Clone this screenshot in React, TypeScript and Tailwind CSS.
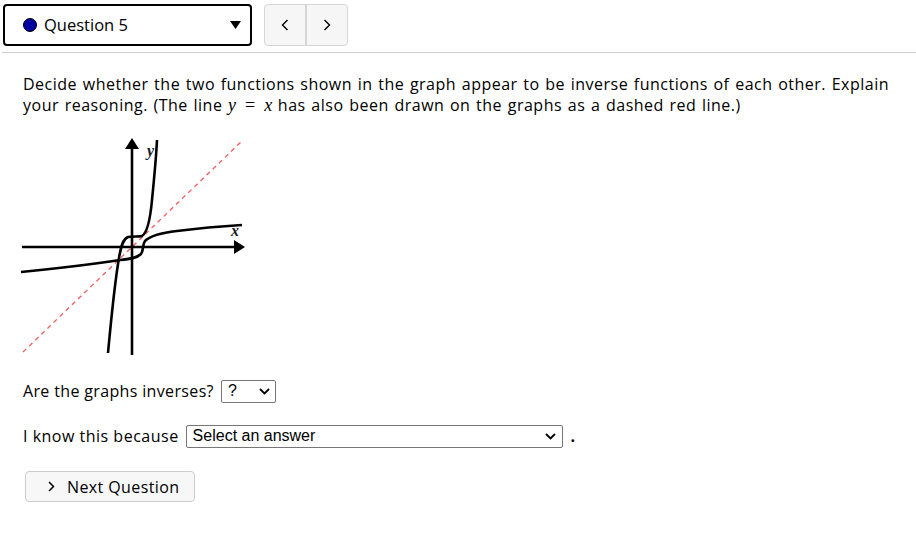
import React from "react";

function Graph() {
  return (
    <svg width="232" height="225" viewBox="20 132 232 225" className="block">
      <line x1="23" y1="352" x2="243" y2="140" stroke="#f45b5b" strokeWidth="1.3" strokeDasharray="4.5 4" />
      <line x1="132" y1="147" x2="132" y2="355" stroke="#000" strokeWidth="2.6" />
      <polygon points="132,138 125,149 139,149" fill="#000" />
      <line x1="22" y1="247" x2="236" y2="247" stroke="#000" strokeWidth="2.6" />
      <polygon points="245,247 234,240 234,254" fill="#000" />
      <path
        d="M108,353 C112,310 116,275 119,258 C121,246 123,239 128,237 C133,236 139,237 142,236 C147,233 150,222 152,200 C154,180 156,160 157,140"
        fill="none"
        stroke="#000"
        strokeWidth="2.6"
      />
      <path
        d="M21,272 C60,268 100,263 120,260 C130,259 137,258 141,254 C144,250 142,245 145,241 C150,236 160,233 177,231 C200,228 225,226 242,225"
        fill="none"
        stroke="#000"
        strokeWidth="2.6"
      />
      <text x="147" y="156" fontFamily="'Liberation Serif', serif" fontStyle="italic" fontWeight="bold" fontSize="16" fill="#1a1a2a">y</text>
      <text x="231" y="236" fontFamily="'Liberation Serif', serif" fontStyle="italic" fontWeight="bold" fontSize="16" fill="#1a1a2a">x</text>
    </svg>
  );
}

function Chevron() {
  return (
    <svg className="ml-auto" width="11" height="7" viewBox="0 0 11 7">
      <path d="M1 1 L5.5 5.5 L10 1" fill="none" stroke="#000" strokeWidth="1.8" />
    </svg>
  );
}

export default function App() {
  return (
    <div className="w-[916px] h-[546px] bg-white text-black overflow-hidden">
      <div className="flex items-start pt-[4px] pl-[3px] gap-[12px] font-['Open_Sans',sans-serif]">
        <div className="w-[249px] h-[42px] border-2 border-black rounded-[4px] flex items-center pl-[18px] pr-[9px]">
          <span className="w-[14px] h-[14px] rounded-full bg-[#0000a0] border border-black" />
          <span className="ml-[7px] text-[16.5px] text-black leading-none">Question 5</span>
          <svg className="ml-auto" width="11" height="8" viewBox="0 0 11 8">
            <polygon points="0,0 11,0 5.5,8" fill="#000" />
          </svg>
        </div>
        <div className="flex h-[42px] w-[84px] border border-[#d6d6d6] rounded-[4px] bg-[#f6f6f6] overflow-hidden">
          <div className="flex-1 flex items-center justify-center border-r-2 border-[#d6d6d6]">
            <svg width="8" height="12" viewBox="0 0 8 12">
              <path d="M6.5 1 L1.5 6 L6.5 11" fill="none" stroke="#000" strokeWidth="1.4" />
            </svg>
          </div>
          <div className="flex-1 flex items-center justify-center">
            <svg width="8" height="12" viewBox="0 0 8 12">
              <path d="M1.5 1 L6.5 6 L1.5 11" fill="none" stroke="#000" strokeWidth="1.4" />
            </svg>
          </div>
        </div>
      </div>
      <div className="mt-[6px] ml-[2px] h-px bg-[#cfcfcf]" />
      <div className="px-[23px] pt-[21px] font-['Open_Sans',sans-serif] text-[16px] text-black">
        <p className="leading-[21px] tracking-[0.5px] [word-spacing:1px] whitespace-nowrap">
          Decide whether the two functions shown in the graph appear to be inverse functions of each other. Explain
          <br />
          your reasoning. (The line{" "}
          <span className="font-['Liberation_Serif',serif] italic text-[18px] tracking-normal">y</span>
          <span className="font-['Liberation_Serif',serif] text-[18px] mx-[9px] tracking-normal">=</span>
          <span className="font-['Liberation_Serif',serif] italic text-[18px] tracking-normal">x</span> has also been drawn on
          the graphs as a dashed red line.)
        </p>
        <div className="mt-[16px] -ml-[3px]">
          <Graph />
        </div>
        <div className="mt-[22px] flex items-center h-[24px]">
          <span className="leading-none tracking-[0.35px]">Are the graphs inverses?</span>
          <div className="ml-[7px] w-[55px] h-[23px] border border-[#767676] rounded-[2px] flex items-center pl-[6px] pr-[5px] font-['Liberation_Sans',sans-serif] text-[16px]">
            <span>?</span>
            <Chevron />
          </div>
        </div>
        <div className="mt-[21px] flex items-center h-[24px]">
          <span className="leading-none tracking-[0.5px]">I know this because</span>
          <div className="ml-[7px] w-[377px] h-[23px] border border-[#767676] rounded-[2px] flex items-center pl-[6px] pr-[6px] font-['Liberation_Sans',sans-serif] text-[16px]">
            <span>Select an answer</span>
            <Chevron />
          </div>
          <span className="ml-[8px] font-bold">.</span>
        </div>
        <button className="mt-[23px] ml-[2px] w-[170px] h-[31px] border border-[#cccccc] rounded-[4px] bg-[#f7f7f7] flex items-center pl-[22px] text-[16px] text-black">
          <svg width="7" height="11" viewBox="0 0 7 11">
            <path d="M1 1 L5.5 5.5 L1 10" fill="none" stroke="#000" strokeWidth="1.5" />
          </svg>
          <span className="ml-[12px] tracking-[0.4px]">Next Question</span>
        </button>
      </div>
    </div>
  );
}
